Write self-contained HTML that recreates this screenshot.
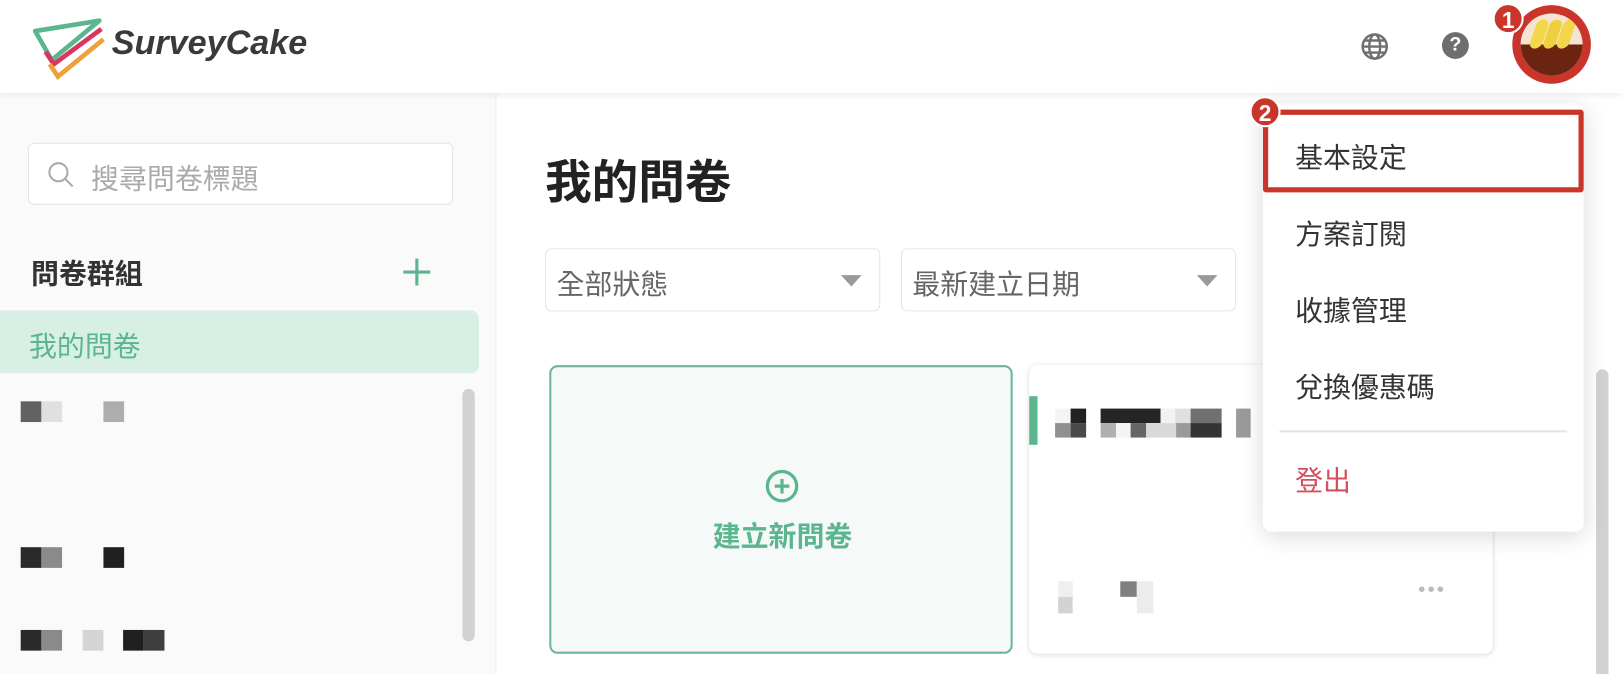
<!DOCTYPE html>
<html><head><meta charset="utf-8"><style>
*{margin:0;padding:0;box-sizing:border-box}
html,body{width:1622px;height:674px;overflow:hidden;background:#fff}
body{font-family:"Liberation Sans","Noto Sans CJK TC",sans-serif;position:relative}
#wrap{position:absolute;left:0;top:0;width:1568px;height:652px;transform:scale(1.0344);transform-origin:0 0}
.abs{position:absolute}
.hdr{left:0;top:0;width:1568px;height:90px;background:#fff;box-shadow:0 2px 6px rgba(0,0,0,.08);z-index:3}
.side{left:0;top:90px;width:480px;height:584px;background:#fafafa;border-right:1px solid #ececec}
.px{position:absolute;width:20px;height:20px}
.menu{left:1221px;top:100px;width:310px;height:414px;background:#fff;border-radius:8px;box-shadow:0 4px 24px rgba(0,0,0,.15);z-index:5}
.mi{position:absolute;left:31px;font-size:27px;color:#333}
.badge{width:30px;height:30px;border-radius:50%;background:#c9352a;color:#fff;font-weight:bold;font-size:22px;text-align:center;line-height:30px;border:2px solid #fff;z-index:7}
</style></head><body><div id="wrap">
<div class="abs hdr">
 <svg class="abs" style="left:30px;top:16px" width="72" height="62" viewBox="0 0 72 62">
  <path d="M4 14 L66 4 L20 42 Z" fill="none" stroke="#5bb58e" stroke-width="4.5" stroke-linejoin="round"/>
  <path d="M14 34 L22 46 L68 12" fill="none" stroke="#d7365e" stroke-width="4.5"/>
  <path d="M18 46 L26 58 L70 22" fill="none" stroke="#eea03a" stroke-width="4.5"/>
 </svg>
 <div class="abs" style="left:108px;top:22px;font-size:33px;font-weight:bold;font-style:italic;color:#3a3a3a">SurveyCake</div>
 <svg class="abs" style="left:1315px;top:31px" width="28" height="28" viewBox="0 0 24 24" fill="none" stroke="#6e6e6e" stroke-width="2"><circle cx="12" cy="12" r="10"/><ellipse cx="12" cy="12" rx="4.5" ry="10"/><path d="M2 12h20M4 7h16M4 17h16"/></svg>
 <div class="abs" style="left:1394px;top:31px;width:26px;height:26px;border-radius:50%;background:#6e6e6e;color:#fff;font-weight:bold;font-size:19px;text-align:center;line-height:26px">?</div>
 <div class="abs" style="left:1462px;top:5px;width:76px;height:76px;border-radius:50%;background:#c9352a"></div>
 <div class="abs" style="left:1470px;top:13px;width:60px;height:60px;border-radius:50%;overflow:hidden;background:#f6e4d2">
  <div class="abs" style="left:0;top:30px;width:60px;height:30px;background:#6b2410"></div>
  <div class="abs" style="left:12px;top:6px;width:12px;height:28px;background:#f3d64a;border-radius:6px;transform:skewX(-18deg)"></div>
  <div class="abs" style="left:25px;top:6px;width:12px;height:28px;background:#f0cf3e;border-radius:6px;transform:skewX(-18deg)"></div>
  <div class="abs" style="left:38px;top:6px;width:12px;height:28px;background:#f3d64a;border-radius:6px;transform:skewX(-18deg)"></div>
 </div>
 <div class="abs badge" style="left:1443px;top:3px">1</div>
</div>

<div class="abs side">
 <div class="abs" style="left:27px;top:48px;width:411px;height:60px;background:#fff;border:1px solid #e3e3e3;border-radius:6px">
  <svg class="abs" style="left:16px;top:15px" width="30" height="30" viewBox="0 0 24 24" fill="none" stroke="#aaa" stroke-width="1.6"><circle cx="10" cy="10" r="7"/><path d="M15 15l6 6"/></svg>
  <div class="abs" style="left:60px;top:12px;font-size:27px;color:#aaa">搜尋問卷標題</div>
 </div>
 <div class="abs" style="left:30px;top:153px;font-size:27px;color:#333;font-weight:bold">問卷群組</div>
 <svg class="abs" style="left:389px;top:159px" width="28" height="28" viewBox="0 0 28 28" stroke="#5bb58e" stroke-width="3"><path d="M14 1v26M1 14h26"/></svg>
 <div class="abs" style="left:0;top:210px;width:463px;height:61px;background:#d7efe4;border-radius:0 8px 8px 0"></div>
 <div class="abs" style="left:28px;top:223px;font-size:27px;color:#5bb58e">我的問卷</div>
 <div class="abs" style="left:447px;top:286px;width:12px;height:244px;background:#d2d2d2;border-radius:6px"></div>
 <div class="px" style="left:20px;top:298px;background:#626262"></div><div class="px" style="left:40px;top:298px;background:#e0e0e0"></div><div class="px" style="left:100px;top:298px;background:#adadad"></div>
 <div class="px" style="left:20px;top:439px;background:#2a2a2a"></div><div class="px" style="left:40px;top:439px;background:#8a8a8a"></div><div class="px" style="left:100px;top:439px;background:#202020"></div>
 <div class="px" style="left:20px;top:519px;background:#2a2a2a"></div><div class="px" style="left:40px;top:519px;background:#8a8a8a"></div><div class="px" style="left:80px;top:519px;background:#d4d4d4"></div><div class="px" style="left:119px;top:519px;background:#202020"></div><div class="px" style="left:139px;top:519px;background:#3e3e3e"></div>
</div>

<div class="abs" style="left:527px;top:140px;font-size:45px;font-weight:bold;color:#222">我的問卷</div>
<div class="abs" style="left:527px;top:240px;width:324px;height:61px;border:1px solid #e6e6e6;border-radius:6px">
 <div class="abs" style="left:10px;top:12px;font-size:27px;color:#666">全部狀態</div>
 <div class="abs" style="left:285px;top:25px;border-left:10px solid transparent;border-right:10px solid transparent;border-top:11px solid #9a9a9a"></div>
</div>
<div class="abs" style="left:871px;top:240px;width:324px;height:61px;border:1px solid #e6e6e6;border-radius:6px">
 <div class="abs" style="left:10px;top:12px;font-size:27px;color:#666">最新建立日期</div>
 <div class="abs" style="left:285px;top:25px;border-left:10px solid transparent;border-right:10px solid transparent;border-top:11px solid #9a9a9a"></div>
</div>
<div class="abs" style="left:531px;top:353px;width:448px;height:279px;border:2px solid #6ab795;border-radius:8px;background:#f5faf8">
 <svg class="abs" style="left:206px;top:98px" width="34" height="34" viewBox="0 0 24 24" fill="none" stroke="#5bb58e" stroke-width="2.2"><circle cx="12" cy="12" r="10"/><path d="M12 7v10M7 12h10"/></svg>
 <div class="abs" style="left:156px;top:142px;font-size:27px;color:#5bb58e;font-weight:bold">建立新問卷</div>
</div>
<div class="abs" style="left:995px;top:353px;width:448px;height:279px;background:#fff;border-radius:8px;box-shadow:0 1px 5px rgba(0,0,0,.15)">
 <div class="abs" style="left:0;top:30px;width:8px;height:47px;background:#5bb58e"></div>
 <div class="px" style="left:25px;top:42px;height:14px;background:#f4f4f4"></div><div class="px" style="left:40px;top:42px;height:14px;width:15px;background:#222"></div>
 <div class="px" style="left:25px;top:56px;height:14px;width:15px;background:#909090"></div><div class="px" style="left:40px;top:56px;height:14px;width:15px;background:#4a4a4a"></div>
 <div class="abs" style="left:69px;top:42px;width:58px;height:14px;background:#252525"></div><div class="abs" style="left:127px;top:42px;width:29px;height:14px;background:#e0e0e0"></div><div class="abs" style="left:127px;top:42px;width:14px;height:14px;background:#f2f2f2"></div><div class="abs" style="left:156px;top:42px;width:30px;height:14px;background:#707070"></div>
 <div class="abs" style="left:69px;top:56px;width:15px;height:14px;background:#b0b0b0"></div><div class="abs" style="left:84px;top:56px;width:14px;height:14px;background:#f4f4f4"></div><div class="abs" style="left:98px;top:56px;width:15px;height:14px;background:#666"></div><div class="abs" style="left:113px;top:56px;width:29px;height:14px;background:#d9d9d9"></div><div class="abs" style="left:142px;top:56px;width:14px;height:14px;background:#999"></div><div class="abs" style="left:156px;top:56px;width:30px;height:14px;background:#333"></div>
 <div class="abs" style="left:200px;top:42px;width:14px;height:28px;background:#9a9a9a"></div>
 <div class="abs" style="left:28px;top:209px;width:14px;height:15px;background:#efefef"></div><div class="abs" style="left:28px;top:224px;width:14px;height:16px;background:#d3d3d3"></div>
 <div class="abs" style="left:88px;top:209px;width:16px;height:15px;background:#808080"></div><div class="abs" style="left:104px;top:209px;width:16px;height:31px;background:#ececec"></div>
 <div class="abs" style="left:376px;top:212px;font-size:20px;color:#bbb;letter-spacing:2px;line-height:10px">•••</div>
</div>

<div class="abs" style="left:1543px;top:357px;width:12px;height:312px;background:#d2d2d2;border-radius:6px"></div>

<div class="abs menu">
 <div class="abs" style="left:0;top:6px;width:310px;height:80px;border:5px solid #c9352a;border-radius:3px"></div>
 <div class="mi" style="top:31px">基本設定</div>
 <div class="mi" style="top:105px">方案訂閱</div>
 <div class="mi" style="top:179px">收據管理</div>
 <div class="mi" style="top:253px">兌換優惠碼</div>
 <div class="abs" style="left:16px;top:316px;width:278px;height:2px;background:#e4e4e4"></div>
 <div class="mi" style="top:343px;color:#d4505f">登出</div>
</div>
<div class="abs badge" style="left:1208px;top:93px">2</div>
</div></body></html>
